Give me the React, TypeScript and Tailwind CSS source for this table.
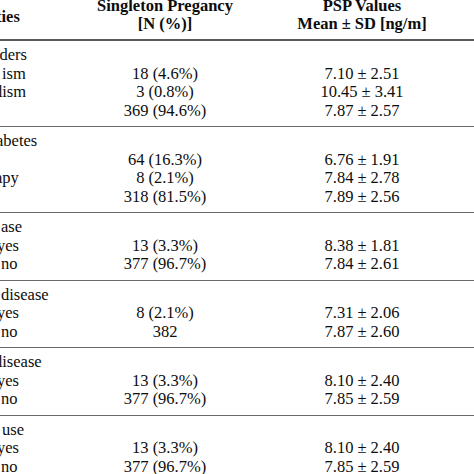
type Row = { label: string; cut: string; n: string; psp: [string, string] | null };
type Group = { title: string; titleCut: string; rows: Row[] };

const groups: Group[] = [
  {
    title: 'rders',
    titleCut: '-ml-[6px]',
    rows: [
      { label: 'ism', cut: 'ml-[2px]', n: '18 (4.6%)', psp: ['7.10', '2.51'] },
      { label: 'dism', cut: '-ml-[6px]', n: '3 (0.8%)', psp: ['10.45', '3.41'] },
      { label: '', cut: '', n: '369 (94.6%)', psp: ['7.87', '2.57'] },
    ],
  },
  {
    title: 'abetes',
    titleCut: '-ml-[4px]',
    rows: [
      { label: '', cut: '', n: '64 (16.3%)', psp: ['6.76', '1.91'] },
      { label: 'apy', cut: '-ml-[5px]', n: '8 (2.1%)', psp: ['7.84', '2.78'] },
      { label: '', cut: '', n: '318 (81.5%)', psp: ['7.89', '2.56'] },
    ],
  },
  {
    title: 'ase',
    titleCut: 'ml-[1px]',
    rows: [
      { label: 'yes', cut: '-ml-[3px]', n: '13 (3.3%)', psp: ['8.38', '1.81'] },
      { label: 'no', cut: 'ml-[1px]', n: '377 (96.7%)', psp: ['7.84', '2.61'] },
    ],
  },
  {
    title: 'disease',
    titleCut: 'ml-[1px]',
    rows: [
      { label: 'yes', cut: '-ml-[3px]', n: '8 (2.1%)', psp: ['7.31', '2.06'] },
      { label: 'no', cut: 'ml-[1px]', n: '382', psp: ['7.87', '2.60'] },
    ],
  },
  {
    title: 'disease',
    titleCut: '-ml-[6px]',
    rows: [
      { label: 'yes', cut: '-ml-[3px]', n: '13 (3.3%)', psp: ['8.10', '2.40'] },
      { label: 'no', cut: 'ml-[1px]', n: '377 (96.7%)', psp: ['7.85', '2.59'] },
    ],
  },
  {
    title: 'use',
    titleCut: 'ml-[2px]',
    rows: [
      { label: 'yes', cut: '-ml-[3px]', n: '13 (3.3%)', psp: ['8.10', '2.40'] },
      { label: 'no', cut: 'ml-[1px]', n: '377 (96.7%)', psp: ['7.85', '2.59'] },
    ],
  },
];

function Pm({ a, b }: { a: string; b: string }) {
  return (
    <span>
      {a}
      <span className="mx-[4px]">±</span>
      {b}
    </span>
  );
}

function Label({ text, cut }: { text: string; cut: string }) {
  return (
    <div className="overflow-hidden">
      <div className={`whitespace-nowrap ${cut}`}>{text}</div>
    </div>
  );
}

export default function App() {
  return (
    <div
      className="w-[474px] h-[474px] overflow-hidden bg-white text-[#0d0d0d] text-[16.5px]"
      style={{ fontFamily: '"Liberation Serif", "Times New Roman", serif' }}
    >
      <div className="-mt-[3px]">
        {/* header */}
        <div className="grid grid-cols-[80px_170px_224px] leading-[18px] font-bold border-b-2 border-[#5a5a5a] pb-[6px]">
          <div className="flex items-center overflow-hidden">
            <div className="whitespace-nowrap -ml-[4px] pt-[4px]">ties</div>
          </div>
          <div className="text-center">
            <div>Singleton Pregancy</div>
            <div>[N (%)]</div>
          </div>
          <div className="text-center">
            <div>PSP Values</div>
            <div>
              Mean<span className="mx-[4px]">±</span>SD [ng/m]
            </div>
          </div>
        </div>

        {groups.map((g, gi) => (
          <div key={gi} className="border-b border-[#6a6a6a] pt-[5px] pb-[6px] leading-[18.5px]">
            <div className="grid grid-cols-[80px_170px_224px]">
              <Label text={g.title} cut={g.titleCut} />
              <div />
              <div />
            </div>
            {g.rows.map((r, ri) => (
              <div key={ri} className="grid grid-cols-[80px_170px_224px]">
                <Label text={r.label} cut={r.cut} />
                <div className="text-center">{r.n}</div>
                <div className="text-center">{r.psp && <Pm a={r.psp[0]} b={r.psp[1]} />}</div>
              </div>
            ))}
          </div>
        ))}
      </div>
    </div>
  );
}
